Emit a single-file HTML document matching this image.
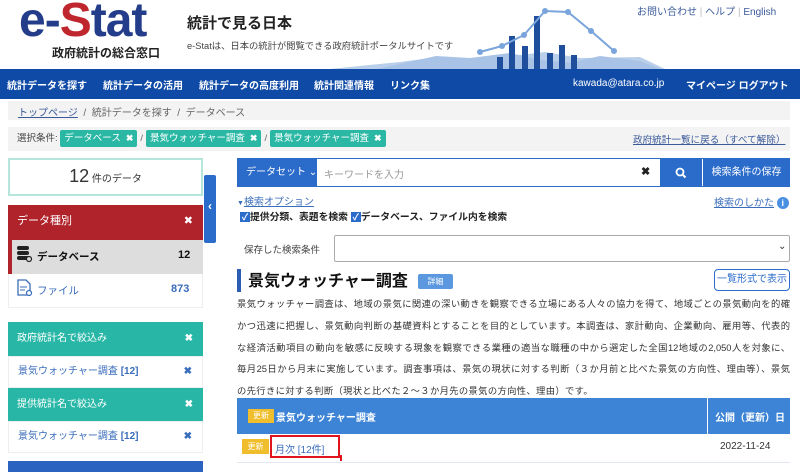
<!DOCTYPE html>
<html><head><meta charset="utf-8"><style>
*{margin:0;padding:0;box-sizing:border-box}
body{width:800px;height:472px;overflow:hidden;background:#fff;font-family:"Liberation Sans","Noto Sans CJK JP",sans-serif;color:#333;position:relative}
.a{position:absolute;white-space:nowrap}
.tag{display:inline-block;height:17px;background:#2ab8a5;color:#fff;font-size:9.5px;line-height:17px;padding:0 4px;border-radius:2px;vertical-align:middle}
.x{font-weight:bold;margin-left:5px;font-size:9px}
.sl{display:inline-block;margin:0 3px;color:#666;vertical-align:middle}
.n{position:absolute;top:77px;font-size:10px;color:#fff;font-weight:bold;white-space:nowrap}
.p div{width:553px;text-align:justify;text-align-last:justify;white-space:nowrap;overflow:hidden}
</style></head><body>
<div class="a" style="left:19px;top:-7px;font-size:48px;font-weight:bold;color:#233d8a;letter-spacing:-1px">e-<span style="color:#c0262d">S</span>tat</div>
<div class="a" style="left:52px;top:44px;font-size:12px;font-weight:bold;color:#222">政府統計の総合窓口</div>
<div class="a" style="left:187px;top:12px;font-size:15px;font-weight:bold;color:#222">統計で見る日本</div>
<div class="a" style="left:187px;top:38px;font-size:9.3px;color:#444">e-Statは、日本の統計が閲覧できる政府統計ポータルサイトです</div>
<div class="a" style="left:637px;top:3px;font-size:10px;color:#3a5a9a">お問い合わせ <span style="color:#bbb">|</span> ヘルプ <span style="color:#bbb">|</span> English</div>
<svg class="a" style="left:0;top:0" width="800" height="70">
<polygon points="330,69 400,62 430,58 460,64 520,55 545,52 580,58 640,57 665,69" fill="#b9cfea"/>
<polygon points="376,69 400,64 436,56 470,58 510,53 540,60 570,63 600,56 640,61 660,69" fill="#a8c3e6"/>
<g fill="#1f4e9c"><rect x="497" y="57" width="6" height="12"/><rect x="509" y="36" width="6" height="33"/><rect x="522" y="46" width="6" height="23"/><rect x="534" y="16" width="6" height="53"/><rect x="547" y="53" width="6" height="16"/><rect x="559" y="45" width="6" height="24"/><rect x="571" y="55" width="6" height="14"/></g>
<polyline points="480,52 502,46 524,35 545,11 568,12 591,31 614,51" fill="none" stroke="#7aa5dc" stroke-width="2"/>
<g fill="#7aa5dc"><circle cx="480" cy="52" r="3"/><circle cx="502" cy="46" r="3"/><circle cx="524" cy="35" r="3"/><circle cx="545" cy="11" r="3"/><circle cx="568" cy="12" r="3"/><circle cx="591" cy="31" r="3"/><circle cx="614" cy="51" r="3"/></g>
</svg>
<div class="a" style="left:0;top:69px;width:800px;height:30px;background:#0e4aa6"></div>
<div class="n" style="left:7px">統計データを探す</div>
<div class="n" style="left:103px">統計データの活用</div>
<div class="n" style="left:199px">統計データの高度利用</div>
<div class="n" style="left:314px">統計関連情報</div>
<div class="n" style="left:390px">リンク集</div>
<div class="n" style="left:573px;font-weight:normal;top:78px">kawada@atara.co.jp</div>
<div class="n" style="left:686px">マイページ ログアウト</div>
<div class="a" style="left:8px;top:101px;width:782px;height:19px;background:#f3f3f3"></div>
<div class="a" style="left:18px;top:104px;font-size:10px;color:#666"><span style="color:#3a5a9a;text-decoration:underline">トップページ</span> &nbsp;/&nbsp; 統計データを探す &nbsp;/&nbsp; データベース</div>
<div class="a" style="left:8px;top:127px;width:782px;height:24px;background:#f3f3f3"></div>
<div class="a" style="left:17px;top:130px;font-size:9.5px;color:#444;line-height:17px"><span style="vertical-align:middle">選択条件:</span> <span class="tag">データベース<span class="x">✖</span></span><span class="sl">/</span><span class="tag">景気ウォッチャー調査<span class="x">✖</span></span><span class="sl">/</span><span class="tag">景気ウォッチャー調査<span class="x">✖</span></span></div>
<div class="a" style="left:633px;top:132px;font-size:9.6px;color:#3a5a9a;text-decoration:underline">政府統計一覧に戻る（すべて解除）</div>
<!-- left -->
<div class="a" style="left:8px;top:158px;width:195px;height:38px;border:2px solid #b5e6dc;text-align:center;font-size:18px;line-height:33px;color:#333">12<span style="font-size:10px"> 件のデータ</span></div>
<div class="a" style="left:8px;top:205px;width:195px;height:35px;background:#b0232b;color:#fff;font-size:11px;line-height:33px;padding-left:9px">データ種別<span style="position:absolute;right:10px">✖</span></div>
<div class="a" style="left:8px;top:240px;width:195px;height:34px;background:#ddd;border-left:4px solid #b0232b"></div>
<svg class="a" style="left:17px;top:246px" width="16" height="17"><g fill="#222"><rect x="0" y="0" width="12" height="4" rx="2"/><rect x="0" y="5" width="12" height="4" rx="2"/><rect x="0" y="10" width="12" height="4" rx="2"/></g><circle cx="12" cy="13" r="2.5" fill="#ddd" stroke="#222" stroke-width="1.2"/></svg>
<div class="a" style="left:37px;top:249px;font-size:10.5px;font-weight:bold;color:#111">データベース</div>
<div class="a" style="left:178px;top:249px;font-size:11px;font-weight:bold;color:#111">12</div>
<div class="a" style="left:8px;top:274px;width:195px;height:34px;border:1px solid #eee;border-top:none"></div>
<svg class="a" style="left:17px;top:279px" width="16" height="18"><path d="M1 1h8l4 4v11H1z" fill="none" stroke="#3a6dbb" stroke-width="1.3"/><path d="M3 8h7M3 11h5" stroke="#3a6dbb"/><circle cx="12" cy="14" r="2.5" fill="#fff" stroke="#3a6dbb" stroke-width="1.2"/></svg>
<div class="a" style="left:37px;top:283px;font-size:10.5px;color:#3a6dbb">ファイル</div>
<div class="a" style="left:171px;top:283px;font-size:11px;font-weight:bold;color:#3a6dbb">873</div>
<div class="a" style="left:8px;top:322px;width:195px;height:34px;background:#28b7a6;color:#fff;font-size:10px;line-height:34px;padding-left:9px">政府統計名で絞込み<span style="position:absolute;right:10px;font-weight:bold">✖</span></div>
<div class="a" style="left:8px;top:356px;width:195px;height:32px;border:1px solid #eee;font-size:10px;color:#3a6dbb;line-height:30px;padding-left:9px">景気ウォッチャー調査 <b>[12]</b><span style="position:absolute;right:10px;font-weight:bold">✖</span></div>
<div class="a" style="left:8px;top:388px;width:195px;height:33px;background:#28b7a6;color:#fff;font-size:10px;line-height:33px;padding-left:9px">提供統計名で絞込み<span style="position:absolute;right:10px;font-weight:bold">✖</span></div>
<div class="a" style="left:8px;top:421px;width:195px;height:32px;border:1px solid #eee;font-size:10px;color:#3a6dbb;line-height:30px;padding-left:9px">景気ウォッチャー調査 <b>[12]</b><span style="position:absolute;right:10px;font-weight:bold">✖</span></div>
<div class="a" style="left:8px;top:461px;width:195px;height:11px;background:#2b63c0"></div>
<div class="a" style="left:204px;top:175px;width:12px;height:68px;background:#2b6ccb;border-radius:2px;color:#fff;font-size:12px;font-weight:bold;padding-top:24px;text-align:center">‹</div>
<!-- right -->
<div class="a" style="left:237px;top:158px;width:553px;height:29px;border:1px solid #2b6ccb"></div>
<div class="a" style="left:237px;top:158px;width:80px;height:29px;background:#2b6ccb;color:#fff;font-size:10px;line-height:29px;padding-left:9px">データセット ⌄</div>
<div class="a" style="left:324px;top:166px;font-size:10px;color:#999">キーワードを入力</div>
<div class="a" style="left:641px;top:165px;font-size:11px;font-weight:bold;color:#222">✖</div>
<div class="a" style="left:660px;top:158px;width:42px;height:29px;background:#2b6ccb"></div>
<svg class="a" style="left:675px;top:167px" width="12" height="12"><circle cx="5" cy="5" r="3.5" fill="none" stroke="#fff" stroke-width="1.8"/><path d="M7.5 7.5l3 3" stroke="#fff" stroke-width="2"/></svg>
<div class="a" style="left:703px;top:158px;width:87px;height:29px;background:#2b6ccb;color:#fff;font-size:10px;line-height:29px;text-align:center">検索条件の保存</div>
<div class="a" style="left:237px;top:193px;font-size:10px;color:#3a6dbb"><span style="font-size:7px">▼</span><u>検索オプション</u></div>
<div class="a" style="left:714px;top:194px;font-size:10px;color:#3a6dbb"><u>検索のしかた</u> <span style="display:inline-block;width:12px;height:12px;border-radius:6px;background:#4a90e2;color:#fff;font-size:9px;text-align:center;line-height:12px;font-weight:bold">i</span></div>
<div class="a" style="left:240px;top:209px;font-size:9.8px;font-weight:bold;color:#222"><span style="display:inline-block;width:10px;height:10px;background:#2b6ccb;color:#fff;font-size:9px;line-height:10px;text-align:center">✓</span>提供分類、表題を検索 <span style="display:inline-block;width:10px;height:10px;background:#2b6ccb;color:#fff;font-size:9px;line-height:10px;text-align:center">✓</span>データベース、ファイル内を検索</div>
<div class="a" style="left:244px;top:242px;font-size:9.5px;color:#444">保存した検索条件</div>
<div class="a" style="left:334px;top:235px;width:456px;height:27px;border:1px solid #aaa;border-radius:2px"></div>
<div class="a" style="left:778px;top:241px;font-size:10px;color:#333">⌄</div>
<div class="a" style="left:237px;top:269px;width:4px;height:23px;background:#2b5db5"></div>
<div class="a" style="left:248px;top:267px;font-size:16px;font-weight:bold;color:#111">景気ウォッチャー調査</div>
<div class="a" style="left:418px;top:274px;width:35px;height:15px;background:#5b98e0;border-radius:2px;color:#fff;font-size:8px;text-align:center;line-height:15px">詳細</div>
<div class="a" style="left:714px;top:269px;width:76px;height:22px;border:1px solid #2b6ccb;border-radius:4px;color:#2b6ccb;font-size:10px;line-height:20px;text-align:center">一覧形式で表示</div>
<div class="a p" style="left:237px;top:294px;font-size:9.3px;line-height:21.8px;color:#333">
<div>景気ウォッチャー調査は、地域の景気に関連の深い動きを観察できる立場にある人々の協力を得て、地域ごとの景気動向を的確</div>
<div>かつ迅速に把握し、景気動向判断の基礎資料とすることを目的としています。本調査は、家計動向、企業動向、雇用等、代表的</div>
<div>な経済活動項目の動向を敏感に反映する現象を観察できる業種の適当な職種の中から選定した全国12地域の2,050人を対象に、</div>
<div>毎月25日から月末に実施しています。調査事項は、景気の現状に対する判断（３か月前と比べた景気の方向性、理由等）、景気</div>
<div style="text-align-last:left;letter-spacing:0.35px">の先行きに対する判断（現状と比べた２～３か月先の景気の方向性、理由）です。</div>
</div>
<div class="a" style="left:237px;top:398px;width:553px;height:36px;background:#3d84d6"></div>
<div class="a" style="left:707px;top:398px;width:1px;height:36px;background:#fff"></div>
<div class="a" style="left:248px;top:409px;width:26px;height:14px;background:#f0be2c;color:#fff;font-size:8px;line-height:14px;text-align:center">更新</div>
<div class="a" style="left:276px;top:409px;font-size:10px;font-weight:bold;color:#fff">景気ウォッチャー調査</div>
<div class="a" style="left:715px;top:409px;font-size:10px;font-weight:bold;color:#fff">公開（更新）日</div>
<div class="a" style="left:242px;top:439px;width:27px;height:15px;background:#f0be2c;color:#fff;font-size:8px;line-height:15px;text-align:center">更新</div>
<div class="a" style="left:270px;top:435px;width:70px;height:23px;border:2px solid #e0141c"></div>
<div class="a" style="left:340px;top:455px;width:2px;height:6px;background:#e0141c"></div>
<div class="a" style="left:275px;top:441px;font-size:10px;color:#3a6dbb">月次 [12件]</div>
<div class="a" style="left:720px;top:441px;font-size:10px;color:#333">2022-11-24</div>
<div class="a" style="left:237px;top:462px;width:553px;height:1px;background:#e3e8f0"></div>
</body></html>
